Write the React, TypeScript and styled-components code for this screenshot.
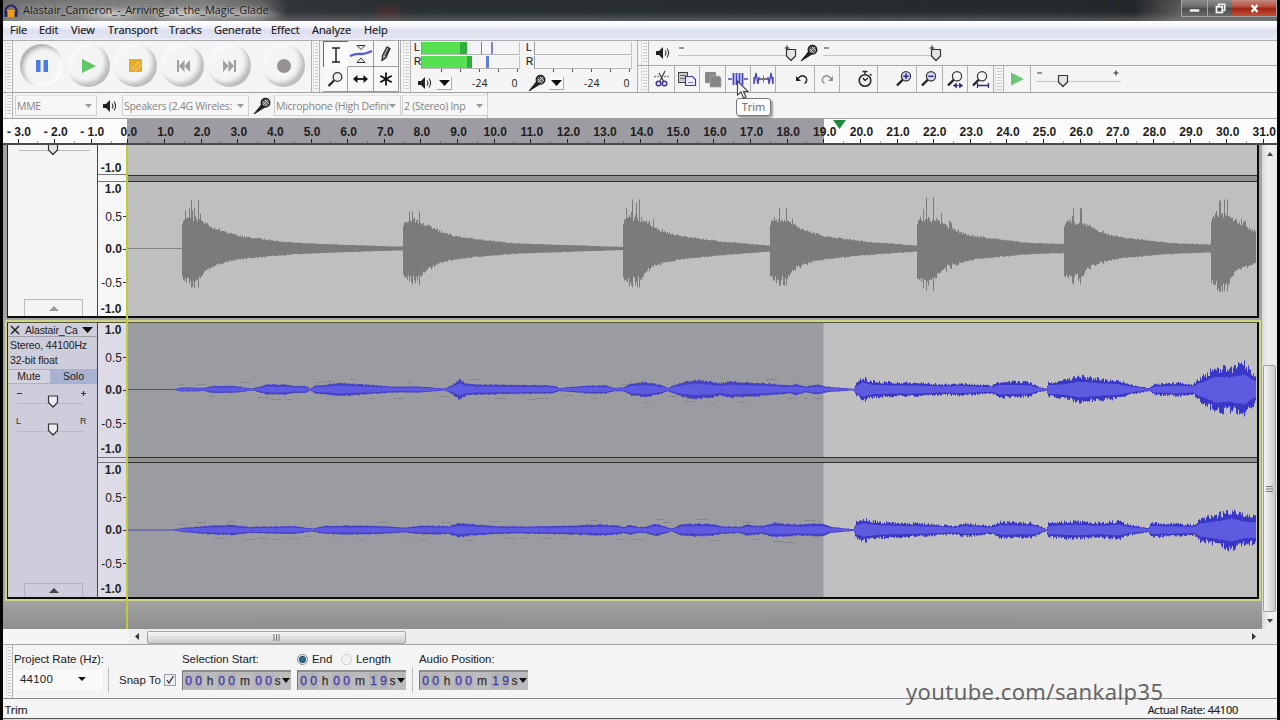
import React from "react";
import styled, { createGlobalStyle, css } from "styled-components";

const GlobalStyle = createGlobalStyle`
  * { box-sizing: border-box; }
  html, body { margin: 0; padding: 0; background: #000; overflow: hidden; }
  body { font-family: "Liberation Sans", Arial, sans-serif; font-size: 11px; color: #222; }
`;

const uiFont = css`font-family: "Open Sans", "Noto Sans", sans-serif;`;

/* ---------- window frame ---------- */

const Window = styled.div`
  position: relative;
  width: 1280px;
  height: 720px;
  overflow: hidden;
  display: flex;
  flex-direction: column;
  background: #f3f2f3;
  border-left: 3px solid #050505;
  border-right: 3px solid #050505;
  white-space: nowrap;
`;

const TitleBar = styled.header`
  height: 21px;
  flex: none;
  display: flex;
  align-items: flex-start;
  background:
    linear-gradient(to bottom, rgba(0, 0, 0, 0.1), rgba(0, 0, 0, 0) 60%, rgba(150, 150, 150, 0.35) 95%),
    radial-gradient(ellipse 34px 9px at 108px 15px, #c9c9c6, rgba(190, 190, 190, 0)),
    radial-gradient(ellipse 34px 9px at 178px 15px, #d0d0cc, rgba(190, 190, 190, 0)),
    radial-gradient(ellipse 46px 8px at 236px 14px, #b0aeac, rgba(150, 150, 150, 0)),
    radial-gradient(ellipse 20px 14px at 386px 14px, #49302e, rgba(60, 40, 40, 0)),
    linear-gradient(to right, #777 0, #848484 60px, #8a8a88 200px, #6b6a6a 258px, #34383c 285px, #2b3236 420px, #272c30 1080px, #25282b 1130px, #5d5d5f 1176px, #5d5d5f 100%);
`;

const TitleText = styled.div`
  ${uiFont}
  flex: 1;
  padding-left: 5px;
  font-size: 11px;
  line-height: 20px;
  letter-spacing: -0.08px;
  color: #1d1d1d;
  text-shadow: 0 0 5px rgba(255, 255, 255, 0.6);
`;

const AppIcon = styled.div`
  width: 14px;
  margin: 4px 0 0 1px;
  height: 14px;
  svg { display: block; }
`;

const WindowButton = styled.div<{ $w: number; $close?: boolean }>`
  width: ${(p) => p.$w}px;
  height: 17px;
  display: flex;
  align-items: center;
  justify-content: center;
  border: 1px solid #a5a5a5;
  border-top: 0;
  border-left-width: ${(p) => (p.$close ? 0 : 1)}px;
  border-right-width: ${(p) => (p.$close ? 1 : 0)}px;
  background: ${(p) =>
    p.$close
      ? "linear-gradient(#c58a80, #b4493a 45%, #9c2410 50%, #c25038)"
      : "linear-gradient(#8a8a8a, #6a6a6a 45%, #4b4b4b 50%, #6a6a6a)"};
`;

const MenuBar = styled.nav`
  ${uiFont}
  height: 20px;
  flex: none;
  display: flex;
  padding-left: 7px;
  font-size: 11px;
  line-height: 17px;
  color: #1a1a1a;
  background: linear-gradient(#ffffff 0, #f3f4fb 30%, #dde1ef 50%, #e2e4f1 88%, #f0f0f4);
  border-bottom: 1px solid #a9abb2;
`;

const MenuItem = styled.div<{ $w: number }>`
  width: ${(p) => p.$w}px;
  letter-spacing: -0.05px;
  -webkit-text-stroke: 0.2px #1a1a1a;
`;

/* ---------- toolbars ---------- */

const ToolbarRow = styled.div<{ $h: number }>`
  height: ${(p) => p.$h}px;
  flex: none;
  display: flex;
  background: #f5f4f5;
  border-bottom: 1px solid #a2a2a2;
`;

const Toolbar = styled.section<{ $w?: number; $line?: boolean }>`
  ${(p) => (p.$w ? `width: ${p.$w}px; flex: none;` : "flex: 1;")}
  display: flex;
  align-items: stretch;
  border-right: ${(p) => (p.$w ? 1 : 0)}px solid #b0b0b0;
  border-bottom: ${(p) => (p.$line ? 1 : 0)}px solid #a8a8a8;
`;

const ToolbarStack = styled.div`
  flex: 1;
  display: grid;
  grid-template-rows: 25px 26px;
`;

const Grabber = styled.div<{ $m?: number; $w?: number }>`
  width: ${(p) => p.$w ?? 8}px;
  flex: none;
  margin-left: ${(p) => p.$m ?? 2}px;
  border-left: 1px solid #dedede;
  border-right: 1px solid #b4b4b4;
  background: repeating-linear-gradient(to bottom, #f6f6f6 0 2px, #c9c9c9 2px 3px);
  background-clip: content-box;
  padding: 2px 1px;
`;

const TransportButton = styled.div<{ $down?: boolean; $ml: number }>`
  width: 43px;
  height: 43px;
  flex: none;
  margin: 3px 0 0 ${(p) => p.$ml}px;
  border-radius: 50%;
  display: flex;
  align-items: center;
  justify-content: center;
  background: #f5f4f5;
  box-shadow: ${(p) =>
    p.$down
      ? "inset 3px 3px 4px #adadad, inset -2px -2px 4px #fff"
      : "inset -4px -4px 4px #bcbcbc, inset 2px 2px 4px #fbfbfb"};
`;

const ToolGrid = styled.div`
  display: grid;
  grid-template-columns: 25px 26px 25px;
  grid-template-rows: 26px 25px;
  margin-left: 3px;
`;

const ToolCell = styled.div<{ $on?: boolean }>`
  display: flex;
  align-items: center;
  justify-content: center;
  border-right: 1px solid #9c9c9c;
  border-bottom: 1px solid #9c9c9c;
  background: #f7f7f8;
  ${(p) => p.$on && "border: 1px solid #666; border-width: 1px 0 0 1px; background: #fbfbfb;"}
`;

const Meter = styled.div<{ $w: number }>`
  width: ${(p) => p.$w}px;
  display: flex;
  flex-direction: column;
`;

const MeterLine = styled.div`
  display: flex;
  height: 14px;
  align-items: center;
  font-size: 10px;
  line-height: 12px;
`;

const MeterName = styled.span<{ $w?: number }>`
  width: ${(p) => p.$w ?? 8}px;
  -webkit-text-stroke: 0.2px #222;
`;

const MeterTrack = styled.div<{ $w: number }>`
  width: ${(p) => p.$w}px;
  height: 13px;
  display: flex;
  border-left: 1px solid #999;
  border-right: 1px solid #c4c4c4;
  border-bottom: 1px solid #b5b5b5;
`;

const Bar = styled.i<{ $w: number; $c: string; $ml?: number }>`
  width: ${(p) => p.$w}px;
  margin-left: ${(p) => p.$ml ?? 0}px;
  background: ${(p) => p.$c};
`;

const MeterTicks = styled.div<{ $ml: number }>`
  height: 5px;
  width: 78px;
  margin-left: ${(p) => p.$ml}px;
  background: repeating-linear-gradient(to right, #555 0 1px, transparent 1px 19px);
  background-size: 100% 3px;
  background-repeat: no-repeat;
`;

const MeterFoot = styled.div`
  display: flex;
  height: 18px;
  align-items: center;
  ${uiFont}
  font-size: 10.5px;
  line-height: 12px;
`;

const Drop = styled.div`
  width: 15px;
  height: 13px;
  display: flex;
  align-items: center;
  justify-content: center;
  background: #fafafa;
  border-right: 1px solid #aaa;
  border-bottom: 1px solid #aaa;
`;

const IconSlot = styled.div<{ $w: number; $edge?: boolean }>`
  width: ${(p) => p.$w}px;
  flex: none;
  display: flex;
  align-items: center;
  justify-content: center;
  border-right: ${(p) => (p.$edge ? 1 : 0)}px solid #b2b2b2;
  svg { display: block; }
`;

const Gap = styled.div<{ $w: number }>`
  width: ${(p) => p.$w}px;
  flex: none;
`;

const VGap = styled.div<{ $h: number }>`
  height: ${(p) => p.$h}px;
  flex: none;
`;

const Combo = styled.div<{ $w: number; $ml?: number }>`
  ${uiFont}
  width: ${(p) => p.$w}px;
  height: 21px;
  flex: none;
  margin: 2px 0 0 ${(p) => p.$ml ?? 0}px;
  padding: 0 4px 0 1px;
  display: flex;
  align-items: center;
  border: 1px solid #d0d0d0;
  border-top-color: #e2e2e2;
  font-size: 10.5px;
  line-height: 18px;
  letter-spacing: -0.28px;
  color: #858585;
  background: #f7f7f7;
  span { flex: 1; }
`;

/* ---------- timeline ---------- */

const Ruler = styled.div`
  height: 26px;
  flex: none;
  display: flex;
  overflow: hidden;
  border-bottom: 2px solid #4a4a4a;
  background: linear-gradient(to right, #fbfbfb 0 124px, #9c9ca2 124px 821px, #fbfbfb 821px);
`;

const RulerCells = styled.div`
  display: flex;
  flex: none;
  margin-left: -2.3px;
`;

const RulerCell = styled.div`
  width: 36.64px;
  flex: none;
  text-align: center;
  font-weight: bold;
  font-size: 12px;
  line-height: 26px;
  color: #1e1e1e;
  background:
    linear-gradient(#222, #222) calc(50% - 1px) 20px / 1px 5px no-repeat,
    linear-gradient(#444, #444) -0.5px 22px / 1px 3px no-repeat;
`;

/* ---------- tracks ---------- */

const Workspace = styled.main`
  position: relative;
  height: 484px;
  flex: none;
  display: flex;
  background: linear-gradient(#a3a3a3 0, #a3a3a3 455px, #8e8e8e);
`;

const TrackList = styled.div`
  width: 1259px;
  flex: none;
  display: flex;
  flex-direction: column;
`;

const TrackFrame = styled.article<{ $h: number; $sel?: boolean }>`
  height: ${(p) => p.$h}px;
  margin: 0 ${(p) => (p.$sel ? 1 : 3)}px 0 ${(p) => (p.$sel ? 2 : 4)}px;
  border: ${(p) => (p.$sel ? "2px solid #cfd488" : "0")};
`;

const TrackBody = styled.div<{ $sel?: boolean }>`
  height: 100%;
  display: flex;
  border: 1px solid #222;
  border-top: ${(p) => (p.$sel ? "1px solid #55553a" : "0")};
  border-right: 2px solid #0c0c0c;
  border-bottom: 2px solid #0c0c0c;
`;

const Panel = styled.aside<{ $sel?: boolean }>`
  width: 90px;
  flex: none;
  display: flex;
  flex-direction: column;
  color: #222;
  background: ${(p) => (p.$sel ? "#cecddb" : "#f4f4f3")};
  border-right: 1px solid #444;
`;

const PanelTitle = styled.div`
  height: 14px;
  display: flex;
  align-items: center;
  padding: 0 4px 0 2px;
  border-bottom: 1px solid #9f9fa9;
  font-size: 10.5px;
  svg { flex: none; }
  span { flex: 1; padding-left: 5px; letter-spacing: -0.15px; }
`;

const PanelText = styled.div`
  height: 15px;
  padding-left: 2px;
  font-size: 10.5px;
  line-height: 16px;
  letter-spacing: -0.12px;
`;

const PanelButtons = styled.div`
  display: flex;
  height: 15px;
  margin-top: 2px;
  border-top: 1px solid #b0b0ba;
  border-bottom: 1px solid #b0b0ba;
`;

const PanelButton = styled.div<{ $on?: boolean; $w: number }>`
  width: ${(p) => p.$w}px;
  text-align: center;
  font-size: 10.5px;
  line-height: 13px;
  background: ${(p) => (p.$on ? "#a9b2d0" : "#d3d2df")};
`;

const Collapse = styled.div<{ $dark?: boolean }>`
  width: 59px;
  height: ${(p) => (p.$dark ? 14 : 17)}px;
  margin: auto 0 0 16px;
  display: flex;
  align-items: center;
  justify-content: center;
  border: 1px solid ${(p) => (p.$dark ? "#b4b3c0" : "#bcbcbc")};
  border-bottom: 0;
`;

const VRuler = styled.div<{ $sel?: boolean }>`
  width: 29px;
  flex: none;
  display: flex;
  flex-direction: column;
  background: ${(p) => (p.$sel ? "#dddce6" : "#f6f6f6")};
`;

const VScale = styled.div<{ $h: number }>`
  height: ${(p) => p.$h}px;
  flex: none;
  display: flex;
  flex-direction: column;
  overflow: hidden;
  border-bottom: 1px solid #777;
  &:last-child { border-bottom: 0; }
`;

const VLabel = styled.div<{ $h: number; $bold?: boolean; $tick?: boolean }>`
  height: ${(p) => p.$h}px;
  flex: none;
  display: flex;
  align-items: center;
  justify-content: flex-end;
  gap: 1px;
  padding-right: ${(p) => (p.$tick ? 1 : 5.5)}px;
  font-size: 12px;
  line-height: 12px;
  font-weight: ${(p) => (p.$bold ? "bold" : "normal")};
  color: #222;
  &::after {
    content: "";
    display: ${(p) => (p.$tick ? "block" : "none")};
    width: 3px;
    height: 1px;
    background: #333;
  }
`;

const WaveColumn = styled.div`
  flex: 1;
  display: flex;
  flex-direction: column;
  svg { display: block; }
`;

const Channel = styled.div<{ $h: number; $sel?: boolean }>`
  height: ${(p) => p.$h}px;
  flex: none;
  overflow: hidden;
  background: ${(p) => (p.$sel ? "linear-gradient(to right, #9b9ba2 0 696px, #c0c0c0 697px)" : "#bfbfbf")};
`;

const ChannelSplit = styled.div<{ $h: number }>`
  height: ${(p) => p.$h}px;
  flex: none;
  border: 1px solid #2e2e2e;
  border-width: 1px 0;
  background: #929292;
`;

const CursorLine = styled.div`
  position: absolute;
  left: 123px;
  top: 0;
  width: 2px;
  height: 484px;
  background: #bfca3a;
`;

/* ---------- scrollbars ---------- */

const VScroll = styled.div`
  flex: 1;
  display: flex;
  flex-direction: column;
  align-items: center;
  background: linear-gradient(to right, #d9d9d9, #efefef 40%, #ececec);
`;

const VThumb = styled.div`
  width: 13px;
  height: 247px;
  margin-top: 202px;
  display: flex;
  align-items: center;
  justify-content: center;
  border: 1px solid #a0a0a0;
  border-radius: 2px;
  background: linear-gradient(to right, #f4f4f4, #dedede 60%, #c8c8c8);
`;

const ArrowBox = styled.div<{ $w: number; $h: number }>`
  width: ${(p) => p.$w}px;
  height: ${(p) => p.$h}px;
  display: flex;
  align-items: center;
  justify-content: center;
`;

const HScroll = styled.div`
  height: 16px;
  flex: none;
  display: flex;
  align-items: center;
  padding: 0 14px 0 126px;
  background: linear-gradient(to right, #f5f5f5 0 126px, #ededed 126px);
  border-bottom: 1px solid #a5a5a5;
`;

const HThumb = styled.div`
  width: 259px;
  height: 13px;
  display: flex;
  align-items: center;
  justify-content: center;
  border: 1px solid #a6a6a6;
  border-radius: 2px;
  background: linear-gradient(#f5f5f5, #e0e0e0 50%, #cacaca);
  margin: 1px auto 0 2px;
`;

/* ---------- selection bar ---------- */

const SelectionBar = styled.footer`
  height: 54px;
  flex: none;
  display: flex;
  background: #f5f4f5;
  border-bottom: 1px solid #8c8c8c;
  font-size: 11.5px;
`;

const Field = styled.div<{ $w: number }>`
  width: ${(p) => p.$w}px;
  flex: none;
  display: flex;
  flex-direction: column;
`;

const FieldHead = styled.div`
  height: 23px;
  padding-top: 5px;
  display: flex;
  align-items: center;
  line-height: 16px;
  letter-spacing: -0.08px;
`;

const FieldBody = styled.div`
  height: 23px;
  display: flex;
  align-items: center;
  line-height: 16px;
`;

const Separator = styled.div`
  width: 1px;
  height: 26px;
  margin-top: 22px;
  flex: none;
  background: #bdbdbd;
`;

const RateBox = styled.div`
  width: 88px;
  height: 20px;
  padding: 0 16px 2px 6px;
  display: flex;
  align-items: center;
  justify-content: space-between;
  background: #fafafa;
  letter-spacing: 0.2px;
`;

const CheckBox = styled.div`
  width: 12px;
  height: 12px;
  margin-left: 3px;
  border: 1px solid #9a9aa2;
  background: #eceef4;
  svg { display: block; }
`;

const Radio = styled.i<{ $on?: boolean }>`
  width: 11px;
  height: 11px;
  border-radius: 50%;
  border: 1px solid ${(p) => (p.$on ? "#7c8c98" : "#c8c8c8")};
  background: ${(p) =>
    p.$on ? "radial-gradient(circle, #2b6f94 0 2px, #27485e 3px, #e8eef2 4px)" : "radial-gradient(circle, #eee 0 3px, #f8f8f8 4px)"};
`;

const RadioText = styled.span<{ $w: number }>`
  width: ${(p) => p.$w}px;
  padding-left: 4px;
`;

const TimeBox = styled.div`
  width: 109px;
  height: 20px;
  display: flex;
  align-items: center;
  background: #bcbcbe;
  border-left: 1px solid #777;
  border-top: 2px solid #8d8d8d;
  padding-left: 1px;
`;

const Digit = styled.span<{ $w: number; $unit?: boolean }>`
  width: ${(p) => p.$w}px;
  flex: none;
  text-align: center;
  font-size: 12px;
  line-height: 16px;
  color: ${(p) => (p.$unit ? "#333" : "#3d38a4")};
  -webkit-text-stroke: 0.25px ${(p) => (p.$unit ? "#333" : "#3d38a4")};
  background: ${(p) => (p.$unit ? "transparent" : "#b2b2b7")};
`;

const StatusBar = styled.div`
  height: 21px;
  flex: none;
  display: flex;
  justify-content: space-between;
  padding: 1px 39px 0 2px;
  ${uiFont}
  font-size: 11px;
  line-height: 20px;
  color: #1d1d1d;
  background: linear-gradient(#f5f4f5 0 18.5px, #555 19px 20px, #ddd 20px);
  span { -webkit-text-stroke: 0.2px #1d1d1d; letter-spacing: -0.25px; }
`;

/* ---------- overlays ---------- */

const Watermark = styled.div`
  position: absolute;
  left: 903px;
  top: 676px;
  font-family: "Noto Sans", sans-serif;
  font-size: 22px;
  line-height: 30px;
  letter-spacing: 0.4px;
  color: #666;
`;

const Tooltip = styled.div`
  position: absolute;
  left: 733px;
  top: 98px;
  width: 35px;
  height: 18px;
  border: 1px solid #777;
  border-radius: 3px;
  background: #fbfbfb;
  box-shadow: 2px 2px 2px rgba(0, 0, 0, 0.35);
  ${uiFont}
  font-size: 11px;
  line-height: 16px;
  text-align: center;
  color: #666;
`;

const Floating = styled.div<{ $x: number; $y: number }>`
  position: absolute;
  left: ${(p) => p.$x}px;
  top: ${(p) => p.$y}px;
  svg { display: block; }
`;

/* ---------- icons ---------- */

const Icon = ({ w, h, children }: { w: number; h: number; children: React.ReactNode }) => (
  <svg width={w} height={h} viewBox={`0 0 ${w} ${h}`} fill="none">
    {children}
  </svg>
);

const Down = ({ w = 9, h = 5, c = "#111" }: { w?: number; h?: number; c?: string }) => (
  <Icon w={w} h={h}>
    <path d={`M0 0H${w}L${w / 2} ${h}Z`} fill={c} />
  </Icon>
);

const Speaker = () => (
  <Icon w={15} h={14}>
    <path d="M1 5h3l4-4v12l-4-4H1z" fill="#222" />
    <path d="M10 4.5q2 2.5 0 5M12 2.5q3.2 4.5 0 9" stroke="#333" strokeWidth="1.1" />
  </Icon>
);

const Mic = () => (
  <Icon w={18} h={18}>
    <path d="M1 17L9 7l3 3z" fill="#222" stroke="#222" strokeWidth="1" />
    <circle cx="12.5" cy="5.8" r="4.3" fill="#666" stroke="#1d1d1d" strokeWidth="1.3" />
    <path d="M10 5l4 4M12 3l4 4M10 8l5-5" stroke="#ddd" strokeWidth="0.8" />
  </Icon>
);

const Thumb = ({ fill = "#e4e4e4" }: { fill?: string }) => (
  <path d="M-4.5 -5.5h9v6.5l-4.5 4.5l-4.5-4.5z" fill={fill} stroke="#333" strokeWidth="1.2" strokeLinejoin="round" />
);

const Magnifier = ({ mark, under }: { mark?: "plus" | "minus"; under?: "arrows" | "span" }) => (
  <Icon w={19} h={19}>
    <path d="M2 15.5L8 9.5" stroke="#222" strokeWidth="2.4" />
    <circle cx="11" cy="6.3" r="4.6" fill={mark ? "#d7d7ee" : "#f4f4f4"} stroke="#333" strokeWidth="1.2" />
    {mark && <path d={mark === "plus" ? "M8.3 6.3h5.4M11 3.6v5.4" : "M8.3 6.3h5.4"} stroke="#2b2a9c" strokeWidth="1.5" />}
    {under === "arrows" && <path d="M7 15.5h10M10.500 13.2v4.600l-3-2.300zM13.500 13.2v4.600l3-2.300z" stroke="#2c2b86" fill="#2c2b86" strokeWidth="0.8" />}
    {under === "span" && <path d="M6 15.5h12M6.5 13v5M17.5 13v5" stroke="#2c2b86" strokeWidth="1.3" />}
  </Icon>
);

const Slider = ({ w, at, plusAt, y = 19 }: { w: number; at: number; plusAt: number; y?: number }) => (
  <Icon w={w} h={25}>
    <path d={`M1 ${y - 3.5}H${w - 4}`} stroke="#c4c4c4" strokeWidth="1.2" />
    <path d={`M2 7h5M${plusAt - 2.5} 7h5M${plusAt} 4.5v5`} stroke="#333" strokeWidth="1.2" />
    <g transform={`translate(${at} ${y - 4})`}>
      <Thumb />
    </g>
  </Icon>
);

/* ---------- waveforms ---------- */

type Pt = [number, number, number]; // x, extent above zero, extent below zero

const noise = (seed: number) => {
  let s = seed;
  return () => {
    s = (s * 16807) % 2147483647;
    return s / 2147483647;
  };
};

const sample = (pts: Pt[], x: number) => {
  for (let i = 1; i < pts.length; i++) {
    if (x <= pts[i][0]) {
      const a = pts[i - 1];
      const b = pts[i];
      const t = (x - a[0]) / Math.max(1e-6, b[0] - a[0]);
      return [a[1] + (b[1] - a[1]) * t, a[2] + (b[2] - a[2]) * t];
    }
  }
  return [pts[pts.length - 1][1], pts[pts.length - 1][2]];
};

const outline = (pts: Pt[], x0: number, zero: number, seed: number, rough: number, scale = 1) => {
  const rnd = noise(seed);
  const top: string[] = [];
  const bottom: string[] = [];
  for (let x = pts[0][0]; x <= pts[pts.length - 1][0]; x++) {
    const [u, d] = sample(pts, x);
    const ju = 1 + (rnd() - 0.55) * rough;
    const jd = 1 + (rnd() - 0.55) * rough;
    const px = x - x0;
    const yu = (zero - Math.max(0.5, u * ju * scale)).toFixed(1);
    const yd = (zero + Math.max(0.5, d * jd * scale)).toFixed(1);
    top.push(`${px} ${yu}L${px + 1} ${yu}`);
    bottom.unshift(`${px + 1} ${yd}L${px} ${yd}`);
  }
  return `M${top.join("L")}L${bottom.join("L")}Z`;
};

const spikes = (x: number, x0: number, zero: number, up: number, down: number, seed: number) => {
  const rnd = noise(seed);
  let d = "";
  for (let i = 0; i < 60; i += 1) {
    if (rnd() < 0.4) continue;
    const fade = i < 6 ? 0.84 : i < 18 ? 1 : Math.max(0.28, 0.78 - (i - 18) / 66);
    const px = x - x0 + i + 0.5;
    const r = rnd();
    const k = 0.62 + r * r * 0.42;
    const k2 = 0.75 + rnd() * 0.27;
    const low = i < 20 ? fade : fade * 0.9;
    d += `M${px} ${(zero - up * fade * k).toFixed(1)}V${(zero + down * low * k2).toFixed(1)}`;
  }
  // the strike itself always reaches the full height
  for (const i of [9, 16]) d += `M${x - x0 + i + 0.5} ${zero - up}V${zero + down}`;
  return d;
};

const X0 = 128;

const pluck = (x: number, end: number, k: number, tail: number): Pt[] => {
  const base: Pt[] = [
    [0, 27, 30], [3, 30, 32], [18, 28, 30], [25, 25, 20], [33, 20, 16.5], [43, 16, 13.5],
    [57, 12.5, 11], [80, 9.5, 8.5], [103, 6.5, 6.5], [117, 5.5, 5.5], [150, 4.2, 4.2], [222, tail, tail],
  ];
  const stop = end - x;
  const out = base.filter((p) => p[0] < stop).map(([dx, u, d]): Pt => [x + dx, u * k, d * k]);
  out.push([end - 1, tail, tail]);
  return out;
};

const plucks = [
  { x: 183, end: 404, k: 1, tail: 1.8, up: 49, down: 39 },
  { x: 404, end: 624, k: 0.92, tail: 1.6, up: 37, down: 36 },
  { x: 624, end: 771, k: 1, tail: 3, up: 49, down: 39 },
  { x: 771, end: 918, k: 0.95, tail: 3, up: 41, down: 37 },
  { x: 918, end: 1065, k: 1, tail: 4.5, up: 51, down: 42 },
  { x: 1065, end: 1212, k: 0.9, tail: 4, up: 40, down: 36 },
  { x: 1212, end: 1258, k: 1.1, tail: 16, up: 49, down: 43 },
];

const sym = (list: [number, number][]): Pt[] => list.map(([x, v]) => [x, v, v]);

const leftEnvelope = sym([
  [175, 0.6], [182, 2], [192, 2], [204, 1.6], [214, 3.5], [235, 3.5], [252, 1], [257, 2], [268, 5], [285, 5],
  [295, 3.5], [305, 3.5], [311, 1], [316, 4], [340, 6.5], [365, 5], [390, 3], [420, 3], [445, 1], [452, 4],
  [460, 10], [467, 6], [480, 5], [520, 4.5], [553, 4], [560, 1.6], [590, 4], [606, 4], [615, 1.6], [624, 2],
  [632, 6], [645, 7.5], [655, 6], [662, 4], [668, 1.6], [674, 4], [682, 7], [695, 9.5], [712, 8], [720, 6],
  [730, 8], [760, 6.5], [785, 4.5], [790, 4], [797, 5.5], [806, 3], [818, 5], [826, 3], [854, 0.8], [857, 6],
  [864, 12], [872, 8], [890, 7], [920, 6.5], [945, 5], [960, 6], [992, 4], [1001, 8], [1030, 7], [1038, 3],
  [1047, 1], [1049, 7], [1065, 9], [1080, 13], [1100, 10.5], [1118, 9], [1133, 4.5], [1150, 1.2], [1155, 5],
  [1178, 6.5], [1194, 5], [1199, 10], [1207, 15], [1217, 22], [1230, 20], [1245, 25], [1250, 19], [1257, 13],
]);

const rightEnvelope = sym([
  [175, 0.6], [182, 2], [195, 3], [212, 4.5], [233, 5], [250, 3], [270, 3.5], [295, 4], [313, 1.5], [325, 4],
  [350, 4.5], [380, 4], [405, 2.5], [425, 4.5], [450, 4], [459, 7], [475, 5.5], [495, 4], [520, 3.5],
  [560, 4], [600, 5.5], [618, 4.5], [624, 3], [631, 5], [638, 3], [646, 3], [656, 6.5], [672, 1.4], [682, 5.5],
  [700, 6.5], [714, 5.5], [722, 4], [740, 3], [748, 5.5], [762, 4], [775, 7], [800, 5.5], [822, 6.5],
  [832, 3], [854, 0.8], [857, 8], [864, 11], [880, 8], [900, 7], [930, 6], [955, 4], [965, 6.5], [992, 4],
  [1001, 8], [1034, 7], [1047, 1], [1049, 7], [1075, 9], [1100, 7], [1120, 9], [1130, 5], [1149, 2],
  [1152, 7], [1175, 6], [1195, 5], [1201, 11], [1215, 14], [1232, 19], [1245, 14], [1257, 13],
]);

const ghostDashes = (seed: number, zero: number, env: Pt[]) => {
  const rnd = noise(seed);
  let d = "";
  for (let x = 180; x < 815; x += 8 + rnd() * 24) {
    const [u] = sample(env, x);
    const up = rnd() < 0.4;
    const y = up ? zero - u - 3.5 - rnd() * 1.5 : zero + u + 3.5 + rnd() * 2;
    d += `M${(x - X0).toFixed(0)} ${Math.round(y) + 0.5}h${(4 + rnd() * 9).toFixed(0)}`;
  }
  return d;
};

const PluckWave = () => (
  <svg width={1129} height={134} viewBox="0 0 1129 134">
    <path d="M0 66.5H56" stroke="#828282" />
    {plucks.map((p, i) => (
      <g key={p.x}>
        <path d={outline(pluck(p.x, p.end, p.k, p.tail), X0, 66.5, 31 + i * 77, 0.16)} fill="#7b7b7b" />
        <path d={spikes(p.x, X0, 66.5, p.up, p.down, 911 + i * 131)} stroke="#7b7b7b" strokeWidth="1" />
      </g>
    ))}
  </svg>
);

const BlueWave = ({ env, zero, seed }: { env: Pt[]; zero: number; seed: number }) => {
  const quiet = env.filter((p) => p[0] <= 854);
  const loud = env.filter((p) => p[0] >= 854);
  return (
    <svg width={1129} height={134} viewBox="0 0 1129 134">
      <path d={`M0 ${zero}H48`} stroke="#4f49ae" strokeWidth="1.2" />
      <path d={ghostDashes(seed + 5, zero, env)} stroke="#88888c" />
      <path d={outline(quiet, X0, zero, seed, 0.22)} fill="#4640c4" />
      <path d={outline(loud, X0, zero, seed + 9, 0.42)} fill="#3a36c8" />
      <path d={outline(env, X0, zero, seed + 3, 0.1, 0.6)} fill="#5f5be0" />
    </svg>
  );
};

const Scale = ({ h, last = 10 }: { h: number; last?: number }) => (
  <VScale $h={h}>
    <VLabel $h={14} $bold>1.0</VLabel>
    <VLabel $h={41} $tick>0.5</VLabel>
    <VLabel $h={24} $bold $tick>0.0</VLabel>
    <VLabel $h={43} $tick>-0.5</VLabel>
    <VLabel $h={last} $bold>-1.0</VLabel>
  </VScale>
);

/* ---------- data ---------- */

const menus: [string, number][] = [
  ["File", 29], ["Edit", 32], ["View", 37], ["Transport", 61], ["Tracks", 45],
  ["Generate", 57], ["Effect", 41], ["Analyze", 52], ["Help", 40],
];

const seconds = Array.from({ length: 35 }, (_, i) => i - 3);

const Time = ({ sec }: { sec: string }) => (
  <TimeBox>
    <Digit $w={9}>0</Digit>
    <Gap $w={1} />
    <Digit $w={9}>0</Digit>
    <Digit $w={14} $unit>h</Digit>
    <Digit $w={9}>0</Digit>
    <Gap $w={1} />
    <Digit $w={9}>0</Digit>
    <Digit $w={18} $unit>m</Digit>
    <Digit $w={9}>{sec[0]}</Digit>
    <Gap $w={1} />
    <Digit $w={9}>{sec[1]}</Digit>
    <Digit $w={9} $unit>s</Digit>
    <Down w={8} h={5} />
  </TimeBox>
);

export default function App() {
  return (
    <Window>
      <GlobalStyle />
      <TitleBar>
        <AppIcon>
          <Icon w={14} h={14}>
            <path d="M1.5 9V7a5.5 5.5 0 0 1 11 0v2" stroke="#22266e" strokeWidth="2" />
            <rect x="3" y="6" width="8" height="7" fill="#f0a018" />
            <rect x="0.5" y="7" width="3" height="6" rx="1" fill="#22266e" />
            <rect x="10.5" y="7" width="3" height="6" rx="1" fill="#22266e" />
          </Icon>
        </AppIcon>
        <TitleText>Alastair_Cameron_-_Arriving_at_the_Magic_Glade</TitleText>
        <WindowButton $w={26}>
          <Icon w={11} h={9}>
            <rect x="0.5" y="5" width="10" height="3" fill="#f4f4f4" stroke="#555" strokeWidth="0.6" />
          </Icon>
        </WindowButton>
        <WindowButton $w={25}>
          <Icon w={11} h={11}>
            <path d="M3.5 3V1.2h6.3v6.3H8" stroke="#f0f0f0" strokeWidth="1.5" />
            <rect x="1.5" y="3.7" width="5.8" height="5.8" stroke="#f4f4f4" strokeWidth="1.8" />
          </Icon>
        </WindowButton>
        <WindowButton $w={45} $close>
          <Icon w={11} h={9}>
            <path d="M2.5 1l6 7M8.5 1l-6 7" stroke="#fff" strokeWidth="2.4" />
          </Icon>
        </WindowButton>
      </TitleBar>

      <MenuBar>
        {menus.map(([name, w]) => (
          <MenuItem key={name} $w={w}>{name}</MenuItem>
        ))}
      </MenuBar>

      <ToolbarRow $h={52}>
        <Toolbar $w={309}>
          <Grabber />
          <TransportButton $down $ml={7}>
            <Icon w={14} h={14}>
              <path d="M1 1h4.5v12H1zM8.5 1H13v12H8.5z" fill="#4b7be0" />
            </Icon>
          </TransportButton>
          <TransportButton $ml={4}>
            <Icon w={16} h={16}>
              <path d="M1 1l14 7l-14 7z" fill="#5fc765" />
            </Icon>
          </TransportButton>
          <TransportButton $ml={4}>
            <Icon w={13} h={13}>
              <rect width="13" height="13" fill="#e9aa2c" />
              <path d="M3 10l7-7M6 12l6-6" stroke="#f3c768" strokeWidth="1.2" />
            </Icon>
          </TransportButton>
          <TransportButton $ml={4}>
            <Icon w={14} h={12}>
              <path d="M1 0h2v12H1zM8.5 0v12L3 6zM14 0v12L8.5 6z" fill="#a0a0a0" />
            </Icon>
          </TransportButton>
          <TransportButton $ml={4}>
            <Icon w={14} h={12}>
              <path d="M0 0v12l5.5-6zM5.5 0v12L11 6zM11 0h2v12h-2z" fill="#a0a0a0" />
            </Icon>
          </TransportButton>
          <TransportButton $ml={11}>
            <Icon w={16} h={16}>
              <circle cx="8" cy="8" r="7" fill="#969292" />
            </Icon>
          </TransportButton>
        </Toolbar>

        <Toolbar $w={89}>
          <Grabber $m={1} $w={7} />
          <ToolGrid>
            <ToolCell $on>
              <Icon w={12} h={16}>
                <path d="M2 1h8M2 15h8M6 1v14" stroke="#222" strokeWidth="1.5" />
              </Icon>
            </ToolCell>
            <ToolCell>
              <Icon w={24} h={22}>
                <path d="M8 2.5h8l-4 4zM8 19.5h8l-4-4.5z" stroke="#333" />
                <path d="M1 13q6-2.5 10-2t12-3" stroke="#5d5ad8" strokeWidth="2.4" />
              </Icon>
            </ToolCell>
            <ToolCell>
              <Icon w={12} h={17}>
                <path d="M2 15.5l0.5-5L7 2l3 1.5L6 12.5z" fill="#aaa" stroke="#222" strokeWidth="1.2" />
                <path d="M5 11l4-7.5" stroke="#222" />
              </Icon>
            </ToolCell>
            <ToolCell>
              <Icon w={17} h={17}>
                <path d="M1.5 15L7 9.5" stroke="#222" strokeWidth="2.2" />
                <circle cx="10.5" cy="6" r="4.3" fill="#eee" stroke="#333" strokeWidth="1.3" />
              </Icon>
            </ToolCell>
            <ToolCell>
              <Icon w={17} h={10}>
                <path d="M3 5h11" stroke="#111" strokeWidth="1.8" />
                <path d="M5.5 1L1 5l4.5 4zM11.5 1L16 5l-4.5 4z" fill="#111" />
              </Icon>
            </ToolCell>
            <ToolCell>
              <Icon w={14} h={14}>
                <path d="M7 0.5v13M1.3 3.7l11.4 6.6M1.3 10.3l11.4-6.6" stroke="#111" strokeWidth="1.8" />
              </Icon>
            </ToolCell>
          </ToolGrid>
        </Toolbar>

        <Toolbar $w={237}>
          <Grabber $m={2} $w={8} />
          <Gap $w={3} />
          <Meter $w={112}>
            <MeterLine>
              <MeterName $w={7}>L</MeterName>
              <MeterTrack $w={99}>
                <Bar $w={38} $c="#56e152" />
                <Bar $w={7} $c="#2fae3c" />
                <Bar $w={1} $ml={14} $c="#5c9e5c" />
                <Bar $w={2} $ml={9} $c="#7d82d8" />
              </MeterTrack>
            </MeterLine>
            <MeterLine>
              <MeterName $w={7}>R</MeterName>
              <MeterTrack $w={99}>
                <Bar $w={45} $c="#56e152" />
                <Bar $w={5} $c="#2fae3c" />
                <Bar $w={3} $ml={14} $c="#5b80d8" />
              </MeterTrack>
            </MeterLine>
            <MeterTicks $ml={27} />
            <MeterFoot>
              <Gap $w={3} />
              <Speaker />
              <Gap $w={5} />
              <Drop><Down w={11} h={6} /></Drop>
              <Gap $w={20} />
              <span>-24</span>
              <Gap $w={24} />
              <span>0</span>
            </MeterFoot>
          </Meter>
          <Meter $w={108}>
            <MeterLine>
              <MeterName>L</MeterName>
              <MeterTrack $w={98} />
            </MeterLine>
            <MeterLine>
              <MeterName>R</MeterName>
              <MeterTrack $w={98} />
            </MeterLine>
            <MeterTicks $ml={27} />
            <MeterFoot>
              <Gap $w={2} />
              <Mic />
              <Gap $w={3} />
              <Drop><Down w={11} h={6} /></Drop>
              <Gap $w={20} />
              <span>-24</span>
              <Gap $w={24} />
              <span>0</span>
            </MeterFoot>
          </Meter>
        </Toolbar>

        <ToolbarStack>
          <Toolbar $line>
            <Grabber $m={3} $w={8} />
            <Gap $w={5} />
            <IconSlot $w={17}><Speaker /></IconSlot>
            <Gap $w={6} />
            <Slider w={122} at={114} plusAt={110} y={18} />
            <IconSlot $w={20}><Mic /></IconSlot>
            <Gap $w={3} />
            <Slider w={122} at={114} plusAt={110} y={18} />
          </Toolbar>
          <Toolbar>
            <Grabber $m={3} $w={8} />
            <IconSlot $w={26} $edge>
              <Icon w={20} h={18}>
                <path d="M2 6.5h5M12 6.5h6" stroke="#888" strokeWidth="1.5" strokeDasharray="2 1" />
                <path d="M13 1L8 11M7 3l5 9" stroke="#444" strokeWidth="1.3" />
                <circle cx="6.5" cy="13.5" r="2.3" stroke="#3735a8" strokeWidth="1.5" />
                <circle cx="12.5" cy="13.5" r="2.3" stroke="#3735a8" strokeWidth="1.5" />
              </Icon>
            </IconSlot>
            <IconSlot $w={25} $edge>
              <Icon w={20} h={16}>
                <rect x="1.5" y="1.5" width="9" height="10" fill="#ccc" stroke="#444" />
                <path d="M3 4.5h6M3 7.5h6" stroke="#666" />
                <path d="M8.5 5.5h7l3 3v6h-10z" fill="#eef" stroke="#3d3b96" strokeWidth="1.2" />
                <path d="M11 11.5h5" stroke="#77c" />
              </Icon>
            </IconSlot>
            <IconSlot $w={26} $edge>
              <Icon w={18} h={17}>
                <rect x="1" y="1" width="11" height="11" rx="1" fill="#888" />
                <path d="M6 5h9l2 2v9H6z" fill="#858585" stroke="#aaa" strokeWidth="0.8" />
              </Icon>
            </IconSlot>
            <IconSlot $w={25} $edge>
              <Icon w={20} h={16}>
                <path d="M0 8h4M16 8h4" stroke="#4a48a8" strokeWidth="1.5" />
                <path d="M5.5 2v12M8.5 2v12M11.5 2v12M14.5 2v12" stroke="#4341c2" strokeWidth="1.8" />
              </Icon>
            </IconSlot>
            <IconSlot $w={25} $edge>
              <Icon w={21} h={16}>
                <path d="M1 6v7l2-11l2 11l1-7M15 6l1 7l2-11l2 11v-7" stroke="#4c4abc" strokeWidth="1.4" />
                <path d="M6 8h9" stroke="#333" strokeWidth="1.3" />
                <path d="M10.500 4.5v7" stroke="#777" />
              </Icon>
            </IconSlot>
            <Gap $w={13} />
            <IconSlot $w={26} $edge>
              <Icon w={14} h={12}>
                <path d="M3 5.5Q7 0.500 11 4.500Q13 8 9.500 10.500" stroke="#222" strokeWidth="1.4" />
                <path d="M1 3v5h5z" fill="#222" />
              </Icon>
            </IconSlot>
            <IconSlot $w={25} $edge>
              <Icon w={14} h={12}>
                <path d="M11 5.500Q7 0.500 3 4.500Q1 8 4.500 10.500" stroke="#8c9490" strokeWidth="1.4" />
                <path d="M13 3v5H8z" fill="#8c9490" />
              </Icon>
            </IconSlot>
            <Gap $w={13} />
            <IconSlot $w={25} $edge>
              <Icon w={16} h={18}>
                <circle cx="8" cy="10.5" r="5.8" fill="#eee" stroke="#2a2a2a" strokeWidth="1.6" />
                <path d="M5.5 1.5h5M8 1.5v3M13 4l1.5 1.5M8 10.5l3-2.5M8 10.5L6 8" stroke="#2a2a2a" strokeWidth="1.4" />
              </Icon>
            </IconSlot>
            <Gap $w={14} />
            <IconSlot $w={25} $edge><Magnifier mark="plus" /></IconSlot>
            <IconSlot $w={26} $edge><Magnifier mark="minus" /></IconSlot>
            <IconSlot $w={25} $edge><Magnifier under="arrows" /></IconSlot>
            <IconSlot $w={26} $edge><Magnifier under="span" /></IconSlot>
            <Grabber $m={1} $w={9} />
            <IconSlot $w={27} $edge>
              <Icon w={15} h={14}>
                <path d="M1 0.5l13 6.5l-13 6.500z" fill="#6cc774" />
              </Icon>
            </IconSlot>
            <Gap $w={4} />
            <Slider w={90} at={28} plusAt={81} y={19} />
          </Toolbar>
        </ToolbarStack>
      </ToolbarRow>

      <ToolbarRow $h={26}>
        <Toolbar $w={485}>
          <Grabber $m={2} $w={8} />
          <Combo $w={82} $ml={2}><span>MME</span><Down w={7} h={4} c="#999" /></Combo>
          <IconSlot $w={25}><Speaker /></IconSlot>
          <Combo $w={127}><span>Speakers (2.4G Wireles:</span><Down w={7} h={4} c="#999" /></Combo>
          <IconSlot $w={25}><Mic /></IconSlot>
          <Combo $w={127}><span>Microphone (High Defini</span><Down w={7} h={4} c="#999" /></Combo>
          <Combo $w={86} $ml={1}><span>2 (Stereo) Inp</span><Down w={7} h={4} c="#999" /></Combo>
        </Toolbar>
        <Toolbar />
      </ToolbarRow>

      <Ruler>
        <RulerCells>
          {seconds.map((s) => (
            <RulerCell key={s}>{s < 0 ? `- ${-s}.0` : `${s}.0`}</RulerCell>
          ))}
        </RulerCells>
      </Ruler>

      <Workspace>
        <TrackList>
          <TrackFrame $h={173}>
            <TrackBody>
              <Panel>
                <Icon w={88} h={14}>
                  <path d="M11 5.5H82" stroke="#bbb" />
                  <g transform="translate(45 4)"><Thumb /></g>
                </Icon>
                <Collapse>
                  <Icon w={10} h={5}><path d="M0 5L5 0l5 5z" fill="#999" /></Icon>
                </Collapse>
              </Panel>
              <VRuler>
                <VScale $h={30}>
                  <VLabel $h={16} />
                  <VLabel $h={13} $bold>-1.0</VLabel>
                </VScale>
                <VScale $h={7} />
                <Scale h={133} />
              </VRuler>
              <WaveColumn>
                <Channel $h={30} />
                <ChannelSplit $h={7} />
                <Channel $h={134}><PluckWave /></Channel>
              </WaveColumn>
            </TrackBody>
          </TrackFrame>
          <VGap $h={2} />
          <TrackFrame $h={281} $sel>
            <TrackBody $sel>
              <Panel $sel>
                <PanelTitle>
                  <Icon w={10} h={10}><path d="M1 1l8 8M9 1L1 9" stroke="#222" strokeWidth="1.5" /></Icon>
                  <span>Alastair_Ca</span>
                  <Down w={11} h={6} />
                </PanelTitle>
                <PanelText>Stereo, 44100Hz</PanelText>
                <PanelText>32-bit float</PanelText>
                <PanelButtons>
                  <PanelButton $w={42}>Mute</PanelButton>
                  <PanelButton $w={47} $on>Solo</PanelButton>
                </PanelButtons>
                <Icon w={88} h={56}>
                  <path d="M9 9.5h5M73 9.5h5M75.5 7v5" stroke="#333" strokeWidth="1.1" />
                  <path d="M10 19.5h66M10 47.5h66" stroke="#b9b8c5" />
                  <text x="8" y="40" fontSize="9" fill="#333" fontFamily="Liberation Sans">L</text>
                  <text x="72" y="40" fontSize="9" fill="#333" fontFamily="Liberation Sans">R</text>
                  <g transform="translate(45 17.5)"><Thumb fill="#eceaf4" /></g>
                  <g transform="translate(45 45.5)"><Thumb fill="#eceaf4" /></g>
                </Icon>
                <Collapse $dark>
                  <Icon w={10} h={5}><path d="M0 5L5 0l5 5z" fill="#444" /></Icon>
                </Collapse>
              </Panel>
              <VRuler $sel>
                <Scale h={135} last={7} />
                <VScale $h={5} />
                <Scale h={134} last={7} />
              </VRuler>
              <WaveColumn>
                <Channel $h={134} $sel><BlueWave env={leftEnvelope} zero={66.5} seed={4217} /></Channel>
                <ChannelSplit $h={6} />
                <Channel $h={134} $sel><BlueWave env={rightEnvelope} zero={67} seed={881} /></Channel>
              </WaveColumn>
            </TrackBody>
          </TrackFrame>
        </TrackList>
        <VScroll>
          <ArrowBox $w={13} $h={18}>
            <Icon w={6} h={4}><path d="M0 4L3 0l3 4z" fill="#444" /></Icon>
          </ArrowBox>
          <VThumb>
            <Icon w={7} h={8}><path d="M0 1.5h7M0 4h7M0 6.5h7" stroke="#777" /></Icon>
          </VThumb>
          <ArrowBox $w={13} $h={17}><Down w={6} h={4} c="#444" /></ArrowBox>
        </VScroll>
        <CursorLine />
      </Workspace>

      <HScroll>
        <ArrowBox $w={16} $h={14}>
          <Icon w={4} h={7}><path d="M4 0v7L0 3.5z" fill="#333" /></Icon>
        </ArrowBox>
        <HThumb>
          <Icon w={8} h={7}><path d="M1 0v7M3.5 0v7M6 0v7" stroke="#777" /></Icon>
        </HThumb>
        <ArrowBox $w={18} $h={14}>
          <Icon w={4} h={7}><path d="M0 0v7l4-3.5z" fill="#333" /></Icon>
        </ArrowBox>
      </HScroll>

      <SelectionBar>
        <Grabber $m={3} $w={7} />
        <Field $w={95}>
          <FieldHead><Gap $w={1} />Project Rate (Hz):</FieldHead>
          <FieldBody><Gap $w={1} /><RateBox>44100<Down w={8} h={4} /></RateBox></FieldBody>
        </Field>
        <Separator />
        <Field $w={73}>
          <FieldHead />
          <FieldBody>
            <Gap $w={10} />Snap To
            <CheckBox>
              <Icon w={10} h={10}><path d="M2 5l2 3l4.5-7" stroke="#333" strokeWidth="1.3" /></Icon>
            </CheckBox>
          </FieldBody>
        </Field>
        <Field $w={115}>
          <FieldHead>Selection Start:</FieldHead>
          <FieldBody><Time sec="00" /></FieldBody>
        </Field>
        <Field $w={115}>
          <FieldHead>
            <Radio $on /><RadioText $w={33}>End</RadioText>
            <Radio /><RadioText $w={50}>Length</RadioText>
          </FieldHead>
          <FieldBody><Time sec="19" /></FieldBody>
        </Field>
        <Separator />
        <Gap $w={6} />
        <Field $w={112}>
          <FieldHead>Audio Position:</FieldHead>
          <FieldBody><Time sec="19" /></FieldBody>
        </Field>
      </SelectionBar>

      <StatusBar>
        <span>Trim</span>
        <span>Actual Rate: 44100</span>
      </StatusBar>

      <Floating $x={830} $y={120}><Down w={13} h={9} c="#1f8a3c" /></Floating>
      <Tooltip>Trim</Tooltip>
      <Floating $x={733} $y={80}>
        <Icon w={13} h={19}>
          <path d="M1.5 1v14l3.5-3l2.5 6l2.5-1l-2.5-5.500h4.500z" fill="#f4f4f4" stroke="#444" strokeWidth="1.1" />
        </Icon>
      </Floating>
      <Watermark>youtube.com/sankalp35</Watermark>
    </Window>
  );
}
